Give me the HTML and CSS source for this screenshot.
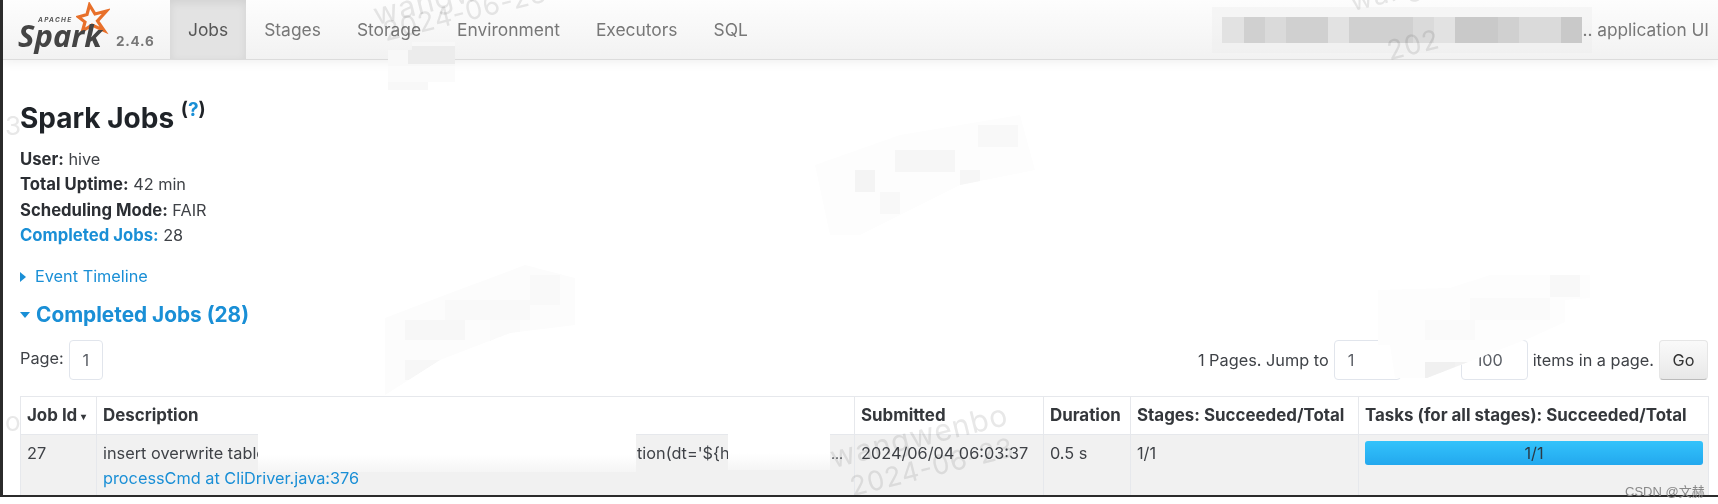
FILE: index.html
```html
<!DOCTYPE html>
<html lang="en">
<head>
<meta charset="utf-8">
<title>Spark Jobs</title>
<link rel="stylesheet" href="styles.css">
</head>
<body>
<div class="page">
<div class="frame">
  <header class="nav">
    <div class="brand">
      <svg class="star" viewBox="77 2 34 33" width="34" height="33"><path d="M90.500 5 L96 14 L107.500 11 L98.500 21 L105 30.500 L93 25 L83.500 31 L86 22 L79.500 17 L88 14.500 Z" fill="none" stroke="#e8702a" stroke-width="3.200" stroke-linejoin="miter"/></svg>
      <span class="apache">APACHE</span>
      <span class="spark">Spark</span>
      <span class="version">2.4.6</span>
    </div>
    <nav class="tabs">
      <a class="tab active">Jobs</a>
      <a class="tab">Stages</a>
      <a class="tab">Storage</a>
      <a class="tab">Environment</a>
      <a class="tab">Executors</a>
      <a class="tab">SQL</a>
    </nav>
    <div class="app-name">
      <div class="mosaic">
        <i class="m1"></i><i class="m3"></i><i class="m2"></i><i class="m3"></i><i class="m3"></i><i class="m1"></i><i class="m3"></i><i class="m3"></i><i class="m3"></i><i class="m2"></i><i class="m1"></i><i class="m4"></i><i class="m4"></i><i class="m3"></i><i class="m2"></i><i class="m2"></i><i class="m4"></i>
      </div>
      <span>.. application UI</span>
    </div>
  </header>

  <main class="content">
    <h1 class="title">Spark Jobs <sup class="help">(<a>?</a>)</sup></h1>
    <ul class="summary">
      <li><b>User:</b> hive</li>
      <li><b>Total Uptime:</b> 42 min</li>
      <li><b>Scheduling Mode:</b> FAIR</li>
      <li><b class="link">Completed Jobs:</b> 28</li>
    </ul>
    <div class="timeline"><span class="arrow-right"></span><a>Event Timeline</a></div>
    <h2 class="section"><span class="arrow-down"></span>Completed Jobs (28)</h2>
    <div class="pager">
      <div class="pager-left"><span class="page-label">Page:</span><span class="box page-box">1</span></div>
      <div class="pager-right">
        <span>1 Pages. Jump to</span>
        <span class="box jump-box">1</span>
        <span class="box size-box">100</span>
        <span>items in a page.</span>
        <span class="go">Go</span>
      </div>
    </div>
    <table class="jobs">
      <colgroup><col class="c1"><col class="c2"><col class="c3"><col class="c4"><col class="c5"><col class="c6"></colgroup>
      <thead>
        <tr><th>Job Id <span class="sort">▾</span></th><th>Description</th><th>Submitted</th><th>Duration</th><th>Stages: Succeeded/Total</th><th>Tasks (for all stages): Succeeded/Total</th></tr>
      </thead>
      <tbody>
        <tr>
          <td>27</td>
          <td><div class="desc"><span>insert overwrite table</span><span>tion(dt='${h</span><span>...</span></div><a>processCmd at CliDriver.java:376</a></td>
          <td>2024/06/04 06:03:37</td>
          <td>0.5 s</td>
          <td>1/1</td>
          <td><div class="bar">1/1</div></td>
        </tr>
      </tbody>
    </table>
  </main>
</div>

<span class="wm w1">wangwenbo</span>
<span class="wm w2">2024-06-23</span>
<span class="wm w3">wangwenbo</span>
<span class="wm w4">2024-06-23</span>
<span class="wm w5">wangwenbo</span>
<span class="wm w6">202</span>
<span class="wm w7">3</span>
<span class="wm w8">o</span>

<div class="patch p1"></div>
<div class="patch p2"></div>

<svg class="mask" viewBox="0 0 1718 504" width="1718" height="504">
  <defs>
    <clipPath id="a"><polygon points="385,318 445,295 525,265 575,278 575,325 510,333 440,360 385,395"/></clipPath>
    <clipPath id="b"><polygon points="815,165 900,135 1020,115 1035,170 960,185 900,215 860,235 830,235"/></clipPath>
    <clipPath id="c"><polygon points="1378,290 1450,288 1490,275 1590,275 1590,298 1565,300 1565,322 1530,338 1427,378 1395,378 1390,345 1378,345"/></clipPath>
    <clipPath id="d"><polygon points="388,50 412,50 412,42 455,42 455,82 428,82 428,90 388,90"/></clipPath>
  </defs>
  <g clip-path="url(#a)">
    <rect x="385" y="265" width="190" height="130" fill="#fcfcfc"/>
    <rect x="445" y="300" width="85" height="20" fill="#f9f9f9"/>
    <rect x="405" y="320" width="60" height="20" fill="#f7f7f7"/>
    <rect x="490" y="320" width="30" height="20" fill="#fafafa"/>
    <rect x="490" y="340" width="20" height="20" fill="#f6f6f6"/>
    <rect x="405" y="360" width="40" height="20" fill="#f7f7f7"/>
    <rect x="530" y="275" width="30" height="30" fill="#f9f9f9"/>
  </g>
  <g clip-path="url(#b)">
    <rect x="815" y="115" width="220" height="120" fill="#fdfdfd"/>
    <rect x="978" y="125" width="40" height="22" fill="#f8f8f8"/>
    <rect x="895" y="150" width="60" height="22" fill="#f6f6f6"/>
    <rect x="855" y="170" width="20" height="22" fill="#f4f4f4"/>
    <rect x="960" y="170" width="20" height="22" fill="#f6f6f6"/>
    <rect x="880" y="192" width="20" height="22" fill="#f8f8f8"/>
  </g>
  <g clip-path="url(#c)">
    <rect x="1378" y="275" width="212" height="103" fill="#fdfdfd"/>
    <rect x="1550" y="275" width="30" height="22" fill="#f8f8f8"/>
    <rect x="1470" y="298" width="80" height="22" fill="#fafafa"/>
    <rect x="1425" y="320" width="50" height="20" fill="#fafafa"/>
    <rect x="1425" y="362" width="30" height="16" fill="#f0f0f0"/>
    <rect x="1455" y="362" width="22" height="10" fill="#f2f2f2"/>
  </g>
  <g clip-path="url(#d)">
    <rect x="388" y="42" width="67" height="48" fill="#f8f8f8"/>
    <rect x="408" y="46" width="47" height="18" fill="#ececec"/>
    <rect x="388" y="66" width="67" height="16" fill="#fbfbfb"/>
  </g>
</svg>
<div class="csdn">CSDN @文赫</div>
</div>
</body>
</html>
```
FILE: styles.css
```css
* { box-sizing: border-box; }
html, body { margin: 0; height: 504px; width: 1718px; overflow: hidden; background: #fff; }
body { font-family: Inter, "Liberation Sans", sans-serif; font-size: 16.300px; color: #3f4247; }
a { color: #1a8fd6; text-decoration: none; }

.page { position: relative; width: 1718px; height: 504px; overflow: hidden; filter: blur(.45px); }
.frame { height: 497px; border-left: 3px solid #2b2b2b; border-bottom: 2px solid #2b2b2b; overflow: hidden; }

.nav { display: flex; align-items: stretch; height: 60px; background: linear-gradient(#fdfdfd, #f2f2f2); border-bottom: 1px solid #dcdcdc; box-shadow: 0 3px 10px rgba(0,0,0,.06); position: relative; }
.brand { width: 167px; position: relative; flex: none; }
.star { position: absolute; left: 73px; top: 2px; }
.apache { position: absolute; left: 35px; top: 16px; font-size: 6.500px; font-weight: 700; letter-spacing: 1.300px; color: #555; font-style: italic; }
.spark { position: absolute; left: 15px; top: 15px; font-family: "Open Sans", sans-serif; font-size: 31px; line-height: 40px; font-style: italic; font-weight: 700; letter-spacing: 0; color: #444; }
.version { position: absolute; left: 113px; top: 33px; font-size: 13.500px; font-weight: 700; color: #777; letter-spacing: .8px; }
.tabs { display: flex; }
.tab { display: flex; align-items: center; padding: 0 18px; font-size: 17.400px; color: #777; }
.tab.active { background: #e3e3e3; color: #555; box-shadow: inset 0 3px 8px rgba(0,0,0,.08); }
.app-name { margin-left: auto; display: flex; align-items: center; padding-right: 9px; font-size: 17.300px; color: #777; }
.mosaic { display: flex; height: 26px; width: 360px; box-shadow: 0 0 0 10px rgba(235,235,235,.35); }
.mosaic i { flex: 1; }
.m1 { background: #e2e2e2; }
.m2 { background: #dadada; }
.m3 { background: #d0d0d0; }
.m4 { background: #c9c9c9; }

.content { padding: 0 10px 0 17px; }
.title { margin: 41px 0 0; font-size: 28px; line-height: 34px; font-weight: 700; color: #1f2328; }
.help { font-size: 19px; line-height: 0; vertical-align: 12px; color: #1f2328; }
.help a { color: #1a8fd6; }
.summary { list-style: none; margin: 12px 0 0; padding: 0; line-height: 25.300px; }
.summary b { font-weight: 700; font-size: 16.700px; color: #2b2e33; }
.summary .link { color: #1a8fd6; }
.timeline { margin-top: 16px; line-height: 25px; display: flex; align-items: center; gap: 9px; }
.arrow-right { width: 0; height: 0; border-left: 6px solid #1a8fd6; border-top: 5px solid transparent; border-bottom: 5px solid transparent; }
.section { margin: 13px 0 0; font-size: 20.800px; line-height: 26px; font-weight: 700; color: #1a8fd6; display: flex; align-items: center; gap: 5px; }
.arrow-down { width: 0; height: 0; border-top: 6px solid #1a8fd6; border-left: 5.500px solid transparent; border-right: 5.500px solid transparent; margin-right: 1px; }

.pager { display: flex; justify-content: space-between; align-items: center; margin-top: 11px; height: 42px; }
.pager-left { display: flex; align-items: center; gap: 5px; }
.pager-right { display: flex; align-items: center; gap: 5px; }
.page-label { position: relative; top: -2px; }
.box { display: block; height: 40px; line-height: 38px; border: 1px solid #e1e5ec; border-radius: 4px; color: #5b5f66; background: #fff; }
.page-box { width: 34px; text-align: center; }
.jump-box { width: 67px; padding-left: 13px; }
.size-box { width: 67px; padding-left: 14px; margin-left: 55px; }
.go { display: block; width: 49px; height: 40px; line-height: 38px; text-align: center; border: 1px solid #e6e6e6; border-bottom-color: #bbb; border-radius: 4px; background: linear-gradient(#fafafa, #e8e8e8); color: #333; }

.jobs { border-collapse: collapse; table-layout: fixed; width: 1688px; margin-top: 15px; }
.c1 { width: 76px; } .c2 { width: 758px; } .c3 { width: 189px; } .c4 { width: 87px; } .c5 { width: 228px; } .c6 { width: 350px; }
.jobs th, .jobs td { border: 1px solid #e6e8ec; padding: 0 6px; text-align: left; vertical-align: top; }
.jobs th { height: 36px; font-size: 16.900px; font-weight: 700; color: #34373b; line-height: 36px; background: #fff; white-space: nowrap; }
.jobs td { height: 70px; background: #f1f1f1; line-height: 25px; padding-top: 6px; white-space: nowrap; }
.sort { font-size: 10px; vertical-align: 1px; }
.desc { display: flex; }
.desc span:nth-child(1) { width: 534px; }
.desc span:nth-child(2) { width: 194px; }
.desc span:nth-child(3) { font-size: 14px; }
.bar { height: 24px; line-height: 24px; text-align: center; border-radius: 3px; background: linear-gradient(#33c3fb, #23a8ee); color: #2b3a46; margin-right: -1px; }

.wm { position: absolute; color: #e8e8e8; font-size: 30px; line-height: 36px; letter-spacing: 1px; transform: rotate(-14deg); transform-origin: left bottom; white-space: nowrap; mix-blend-mode: multiply; }
.w1 { left: 835px; top: 439px; }
.w2 { left: 855px; top: 469px; font-size: 27px; }
.w3 { left: 378px; top: -4px; }
.w4 { left: 388px; top: 14px; font-size: 27px; }
.w5 { left: 1355px; top: -16px; font-size: 27px; }
.w6 { left: 1392px; top: 33px; font-size: 27px; }
.w7 { left: 5px; top: 108px; font-size: 26px; transform: none; }
.w8 { left: 5px; top: 404px; font-size: 26px; transform: none; }

.patch { position: absolute; background: linear-gradient(#fff 55%, #f5f5f5); }
.p1 { left: 258px; top: 433px; width: 378px; height: 39px; }
.p2 { left: 728px; top: 433px; width: 102px; height: 37px; }
.mask { position: absolute; left: 0; top: 0; pointer-events: none; }

.csdn { position: absolute; left: 1625px; top: 481px; font-size: 13px; color: #888; font-family: "Liberation Sans", "Noto Sans CJK SC", sans-serif; }
```
